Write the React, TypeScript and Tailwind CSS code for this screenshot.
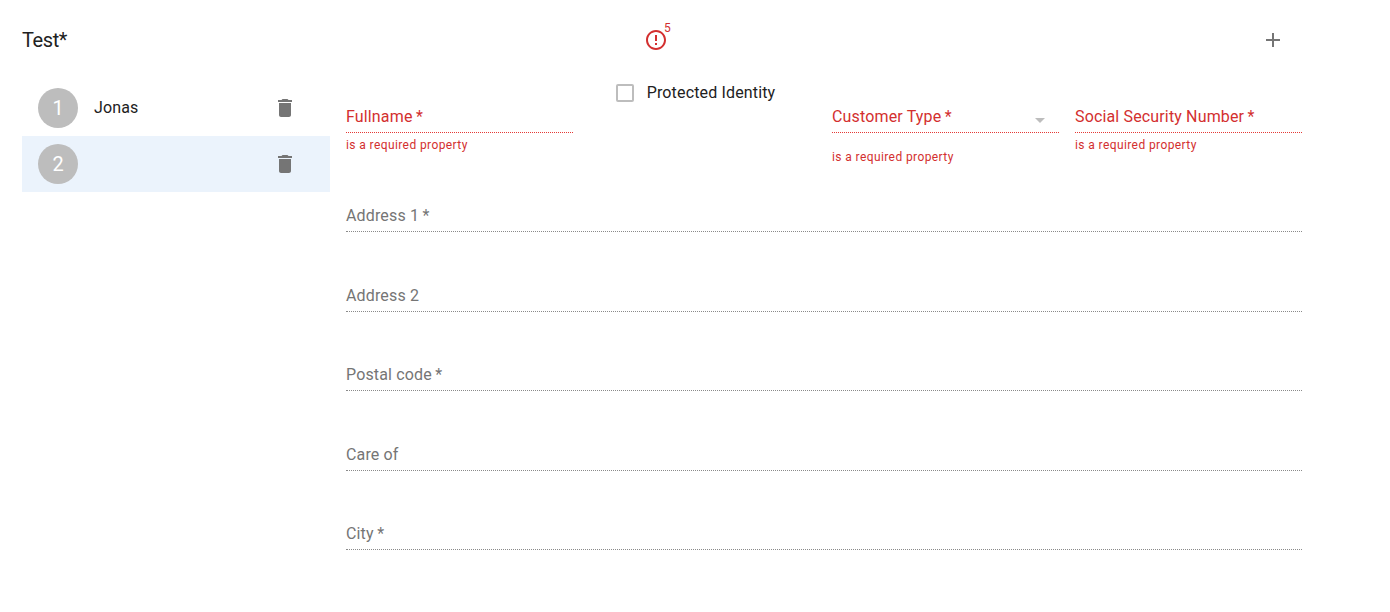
import React from "react";

const trashPath = "M6 19c0 1.1.9 2 2 2h8c1.1 0 2-.9 2-2V7H6v12zM19 4h-3.5l-1-1h-5l-1 1H5v2h14V4z";
const errorPath =
  "M11 15h2v2h-2zm0-8h2v6h-2zm.99-5C6.47 2 2 6.48 2 12s4.47 10 9.99 10C17.52 22 22 17.52 22 12S17.52 2 11.99 2zM12 20c-4.42 0-8-3.58-8-8s3.58-8 8-8 8 3.58 8 8-3.58 8-8 8z";

function Icon({ d, className }: { d: string; className: string }) {
  return (
    <svg viewBox="0 0 24 24" width="24" height="24" fill="currentColor" className={className}>
      <path d={d} />
    </svg>
  );
}

function Person({ n, name, selected }: { n: number; name?: string; selected?: boolean }) {
  return (
    <div className={`flex h-14 items-center pl-4 pr-[33px] ${selected ? "bg-[#ebf3fc]" : ""}`}>
      <div className="flex h-10 w-10 items-center justify-center rounded-full bg-[#bdbdbd] text-xl text-white">{n}</div>
      <div className="ml-4 flex-1 text-base tracking-[0.00938em] text-[#212121]">{name}</div>
      <Icon d={trashPath} className="text-[#757575]" />
    </div>
  );
}

function RequiredError({ className = "" }: { className?: string }) {
  return <p className={`text-xs leading-[14px] tracking-[0.03333em] text-[#d32f2f] ${className}`}>is a required property</p>;
}

function ErrorField({ label, select }: { label: string; select?: boolean }) {
  return (
    <div className="relative flex h-[53px] items-end border-b border-dotted border-[#e53935] pb-[6px] text-base leading-[19px] tracking-[0.00938em] text-[#d32f2f]">
      <span>{label}&thinsp;*</span>
      {select && (
        <svg viewBox="0 0 24 24" width="24" height="24" fill="currentColor" className="absolute right-[7px] top-[28px] text-[#bdbdbd]">
          <path d="M7 10l5 5 5-5z" />
        </svg>
      )}
    </div>
  );
}

function Field({ label, required }: { label: string; required?: boolean }) {
  return (
    <div className="flex h-[53px] items-end border-b border-dotted border-[#8a8a8a] pb-[6px] text-base leading-[19px] tracking-[0.00938em] text-[#757575]">
      <span>
        {label}
        {required && <>&thinsp;*</>}
      </span>
    </div>
  );
}

export default function App() {
  return (
    <div className="h-[612px] w-[1390px] overflow-hidden bg-white font-['Roboto',sans-serif]">
      <header className="flex h-20 items-center pl-[22px]">
        <h1 className="w-[622px] text-xl tracking-[-0.02em] text-[#212121]">Test*</h1>
        <div className="relative">
          <Icon d={errorPath} className="text-[#d32f2f]" />
          <span className="absolute left-[20px] top-[-8px] text-xs text-[#d32f2f]">5</span>
        </div>
        <Icon d="M19 13h-6v6h-2v-6H5v-2h6V5h2v6h6v2z" className="ml-[593px] text-[#757575]" />
      </header>

      <div className="flex">
        <aside className="ml-[22px] w-[308px]">
          <Person n={1} name="Jonas" />
          <Person n={2} selected />
        </aside>

        <main className="w-[972px]">
          <div className="grid grid-cols-4">
            <div className="pl-4">
              <ErrorField label="Fullname" />
              <RequiredError className="mt-[5px]" />
            </div>
            <label className="flex h-6 items-start justify-center gap-[13px] pl-[2px] text-base tracking-[0.00938em] text-[#212121]">
              <span className="mt-1 h-[18px] w-[18px] rounded-[2px] border-2 border-[#bdbdbd]" />
              <span className="mt-px">Protected Identity</span>
            </label>
            <div className="pl-4">
              <ErrorField label="Customer Type" select />
              <RequiredError className="mt-[17px]" />
            </div>
            <div className="pl-4">
              <ErrorField label="Social Security Number" />
              <RequiredError className="mt-[5px]" />
            </div>
          </div>

          <div className="mt-[15.4px] flex flex-col gap-[26.5px] pl-4">
            <Field label="Address 1" required />
            <Field label="Address 2" />
            <Field label="Postal code" required />
            <Field label="Care of" />
            <Field label="City" required />
          </div>
        </main>
      </div>
    </div>
  );
}
